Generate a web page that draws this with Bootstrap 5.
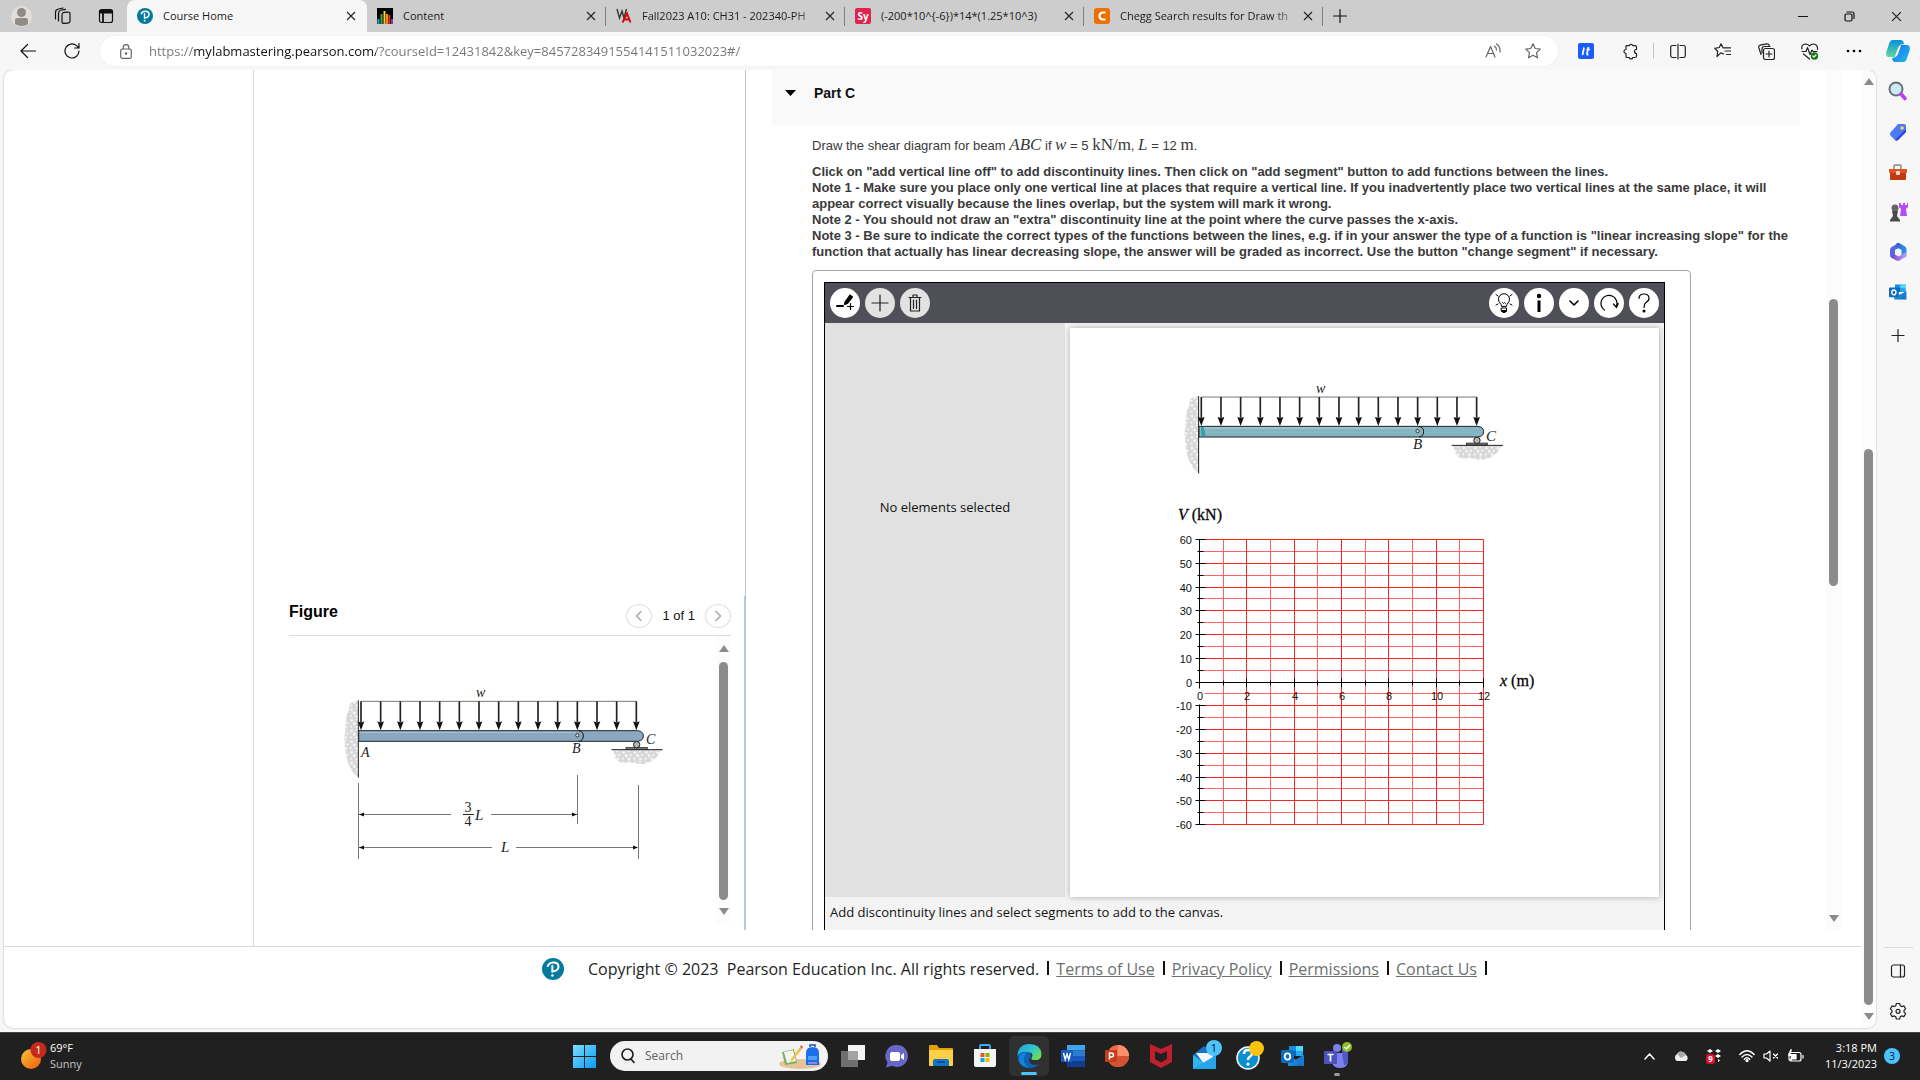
<!DOCTYPE html>
<html lang="en">
<head>
<meta charset="utf-8">
<meta name="viewport" content="width=device-width, initial-scale=1">
<title>Course Home</title>
<link href="https://cdn.jsdelivr.net/npm/bootstrap@5.3.0/dist/css/bootstrap.min.css" rel="stylesheet">
<style>
:root{--ui:"Open Sans","Noto Sans",sans-serif;--arial:"Liberation Sans",Arial,sans-serif;--math:"Liberation Serif","Times New Roman",serif}
body{height:100vh;background:#f7f7f7;font-family:var(--ui);font-size:12px;line-height:16px;color:#111;overflow:hidden}
svg{display:block;flex:none}
button{padding:0;border:0;background:none;color:inherit}
.ico{fill:none;stroke:currentColor;stroke-width:1.2;stroke-linecap:round;stroke-linejoin:round}
/* tab strip */
.tabstrip{height:32px;background:#cdcdcd;flex:none}
.strip-start{width:127px;padding-left:11px;gap:22px}
.browser-tab{width:239px;padding:0 10px;gap:10px;height:32px;position:relative;font-size:11px}
.browser-tab.current{background:#f7f7f7;border-radius:8px 8px 0 0;width:240px;padding-right:11px}
.browser-tab.divided::after{content:"";position:absolute;right:0;top:7px;height:19px;width:1px;background:#7c7c7c}
.tab-title{flex:1;min-width:0;white-space:nowrap;color:#1b1b1b}
.tab-title.fading{-webkit-mask-image:linear-gradient(90deg,#000 88%,#0005)}
.window-keys{gap:36px;padding-right:18px}
/* toolbar */
.toolbar{height:38px;flex:none;padding-left:20px}
.address{height:30px;border-radius:15px;background:#fff;margin-left:20px;padding:0 17px 0 20px;box-shadow:0 0 3px #0000000d;color:#666}
.address input{border:0;outline:0;padding:0;margin-left:17px;min-width:0;font-size:13px;color:transparent;background:linear-gradient(90deg,#757575 45px,#111 45px,#111 227px,#757575 227px);-webkit-background-clip:text;background-clip:text}
.tools{padding-left:6px;color:#222;flex:none}
.cell{width:44px;display:flex;justify-content:center}
.tools .rule{width:1px;height:16px;background:#c5c5c5;margin:0 2px 0 1px}
/* browser frame */
.view{margin:0 0 4px 4px;background:#fff;border-radius:9px;box-shadow:0 0 2px #0000004d;overflow:hidden;min-width:0;min-height:0}
.edgebar{width:44px;padding:10px 0 12px;color:#222;flex:none}
.edgebar .group{gap:16px}
.edgebar hr{width:29px;margin:0;border-color:#888}
.gutter{width:15px;flex:none;background:#fcfcfc}
.thumb{width:9px;border-radius:5px;background:#8b8b8b}
.arrow{width:0;height:0;border:5px solid transparent;border-top-width:0;border-bottom:7px solid #8b8b8b;flex:none}
.arrow.down{border-bottom-width:0;border-top:7px solid #8b8b8b}
/* course page */
.course{min-height:0}
.course-nav{width:250px;border-right:1px solid #d9d9d9;flex:none}
.figure-col{width:492px;flex:none;margin-bottom:16px;border-right:1px solid #b5c9dc}
.figure-box{padding:0 13px 0 35px;height:334px;border-right:1px solid #b5c9dc;font-family:var(--arial)}
.figure-head{height:40px;border-bottom:1px solid #dcdcdc}
.figure-head h2{font-size:16px;font-weight:700;line-height:20px;color:#000;margin:0 0 7px}
.pager-row{gap:10px;font-size:13px}
.pager{width:26px;height:24px;border:1px solid #dedede;border-radius:50%;color:#aaa}
.item-col{min-width:0;margin-bottom:16px;padding-left:26px;overflow:hidden}
.part-head{height:55px;background:#f9f9f9;padding:0 0 10px 13px;gap:18px;font-family:var(--arial)}
.part-head h3{font-size:14px;line-height:20px;font-weight:700;margin:0}
.problem{padding:10px 0 0 40px;font-family:var(--arial);color:#3a3a3a;font-size:13px}
.problem .ask{line-height:20px;margin-bottom:8px}
.problem .notes{font-weight:700;margin:0 0 10px}
.tex{font-family:var(--math);font-size:17px}
.answer{max-width:879px;border:1px solid #a6a6a6;border-radius:4px;padding:11px 25px 11px 11px;height:700px}
.tool{border:1px solid #000;background:#f3f3f3;font-family:var(--ui);color:#111;height:690px}
.tool-bar{height:40px;background:#4f4f58;padding:0 5px}
.round{width:30px;height:30px;border-radius:50%;background:#fff;color:#000;display:flex;align-items:center;justify-content:center}
.round:disabled{background:#e2e2e2;color:#222}
.props{width:240px;background:#e1e1e1;flex:none;padding-top:176px;font-size:13px}
.board-wrap{padding:5px 5px 0;height:574px}
.board{background:#fff;box-shadow:0 0 6px #0000004d;height:569px}
.status{height:30px;padding:7px 5px;font-size:13px}
.site-footer{height:82px;flex:none;border-top:1px solid #d9d9d9;font-size:16px;line-height:24px;color:#252525;padding:10px 0 0 538px;white-space:nowrap}
.site-footer a{color:#6a7070}
.site-footer .bar{width:2px;height:14px;background:#111;margin:4px 7px 0 8px}
/* task bar */
.taskbar{height:48px;background:#202020;border-top:1px solid #454545;color:#fff;flex:none;font-size:11px;padding-bottom:1px}
.side-slot{flex:1 1 0;min-width:0}
.start{margin-left:12px}
.task-search{width:218px;height:30px;border-radius:15px;background:#f2f2f2;margin:0 3px 0 14px;padding:0 6px 0 10px}
.task-search input{border:0;outline:0;background:none;padding:0;width:100px;margin-left:10px;font-size:12px;color:#555}
.task-search input::placeholder{color:#606060;opacity:1}
.app{width:44px;height:40px;display:flex;align-items:center;justify-content:center;position:relative}
.app.open{background:#303030;border-radius:5px;width:40px;margin:0 2px}
.app.open::after{content:"";position:absolute;left:12px;bottom:1px;width:16px;height:3px;border-radius:2px;background:#4cc2ff}
.app.idle::after{content:"";position:absolute;left:19px;bottom:0;width:6px;height:3px;border-radius:2px;background:#9a9a9a}
.weather{padding-left:20px;gap:3px}
.tray{padding-right:20px}
.tray-icons{gap:16px}
.clock{width:73px;text-align:right}
.count{width:16px;height:16px;border-radius:50%;background:#4cc2ff;color:#111;font-size:10px;text-align:center;margin-left:7px}
svg text.it{font-family:var(--math);font-style:italic;fill:#222}
svg text.num{font-family:var(--arial);font-size:11px;fill:#111}
</style>
<script defer src="https://cdn.jsdelivr.net/npm/bootstrap@5.3.0/dist/js/bootstrap.bundle.min.js"></script>
</head>
<body class="d-flex flex-column">

<!-- shared drawings -->
<svg width="0" height="0" class="position-absolute" aria-hidden="true">
<defs>
<symbol id="pearson" viewBox="0 0 24 24"><circle cx="12" cy="12" r="12" fill="#047a9c"/><path d="M6 9.500C7 6.500 9.500 5 12.500 5c3.500 0 5.500 2 5.500 4.500s-2.300 5-5.500 5M11.300 8v8" fill="none" stroke="#fff" stroke-width="2.200"/><circle cx="11.400" cy="19" r="1.400" fill="#fff"/></symbol>
<symbol id="x" viewBox="0 0 10 10"><path d="M1 1l8 8M9 1L1 9" stroke="#222" stroke-width="1.100"/></symbol>
<linearGradient id="ol" x2="1" y2="1"><stop stop-color="#35b8f1"/><stop offset="1" stop-color="#0a64c0"/></linearGradient>
<linearGradient id="cp" x2="1" y2="1"><stop stop-color="#2450e0"/><stop offset=".4" stop-color="#1a8ff0"/><stop offset="1" stop-color="#22b8f5"/></linearGradient>
<linearGradient id="cp2" x2="0" y2="1"><stop stop-color="#0a8fe0"/><stop offset="1" stop-color="#5ed89a"/></linearGradient>
<linearGradient id="win" x2="1" y2="1"><stop stop-color="#7bdcff"/><stop offset="1" stop-color="#0a9cf5"/></linearGradient>
<linearGradient id="sun" x2="1" y2="1"><stop stop-color="#f7c531"/><stop offset="1" stop-color="#f05a10"/></linearGradient>
<linearGradient id="edge" x2="1" y2=".7"><stop stop-color="#1c9fe0"/><stop offset=".6" stop-color="#35c8c8"/><stop offset="1" stop-color="#6be04f"/></linearGradient>
<linearGradient id="m1" x2="1" y2="1"><stop stop-color="#2b59d8"/><stop offset="1" stop-color="#35a6ee"/></linearGradient>
<linearGradient id="m2" x2="1"><stop stop-color="#6a45c8"/><stop offset="1" stop-color="#c79af0"/></linearGradient>
<symbol id="outlook" viewBox="0 0 24 24"><path d="M8 2h14v9H8z" fill="#1490df"/><path d="M15 2h7v5h-7z" fill="#50d9ff"/><path d="M8 7h7v5H8z" fill="#0364b8"/><path d="M15 7h7v5h-7z" fill="#28a8ea"/><path d="M6 11l9 5 8-5v11H7z" fill="url(#ol)"/><path d="M23 11v11l-9-6z" fill="#1a7cd0"/><rect y="6" width="13" height="13" rx="1.200" fill="#0f6cbd"/><ellipse cx="6.500" cy="12.500" rx="2.800" ry="3.200" fill="none" stroke="#fff" stroke-width="1.800"/></symbol>
<pattern id="gravel" width="34" height="32" patternUnits="userSpaceOnUse"><rect width="34" height="32" fill="#d8d8d8"/><circle cx="7" cy="7" r="3.500" fill="#fff"/><circle cx="22" cy="4" r="2.500" fill="#fff"/><circle cx="15" cy="17" r="4" fill="#fff"/><circle cx="28" cy="15" r="3" fill="#fff"/><circle cx="5" cy="26" r="2.800" fill="#fff"/><circle cx="23" cy="27" r="3.500" fill="#fff"/></pattern>
<g id="load"><path d="M0 334v62" stroke="#222" stroke-width="5"/><path d="M-10 394l10 27 10-27q-10 5-20 0z" fill="#111"/></g>
<!-- drawn at three times its displayed size -->
<g id="beam">
<path d="M265 333q-20-2-27 12 2 14-6 24-8 14-3 28-8 14-3 28-6 18-1 32-3 18 3 34 2 24 12 40 8 20 25 30z" fill="url(#gravel)"/>
<path d="M1030 480h145q-14 14-14 22-12 4-16 12-12 4-20 8-16-2-24 0-18-4-24-6-14 6-28 0-18-8-19-36z" fill="url(#gravel)"/>
<path d="M265 331v232" stroke="#222" stroke-width="3"/>
<path d="M273 334h826" stroke="#777" stroke-width="3"/>
<g id="loads"></g>
<path d="M266 422h837q17 2 17 16t-17 16H266z" fill="currentColor" stroke="#222" stroke-width="3"/>
<path d="M268 427h650" stroke="#fff" stroke-opacity=".25" stroke-width="4"/>
<path d="M926 422q14 2 14 16t-14 16" fill="none" stroke="#111" stroke-width="3"/>
<circle cx="922" cy="436" r="5" fill="#ddd" stroke="#222" stroke-width="2.500"/>
<rect x="1068" y="472" width="64" height="6" fill="#777" stroke="#222" stroke-width="2"/>
<path d="M1024 479h154" stroke="#222" stroke-width="3"/>
<circle cx="1100" cy="464" r="9.500" fill="#b5b5b5" stroke="#222" stroke-width="3"/>
</g>
</defs>
</svg>

<!-- tabs -->
<header class="tabstrip d-flex align-items-center">
  <div class="strip-start d-flex align-items-center">
    <svg width="21" height="21" viewBox="0 0 21 21"><circle cx="10.500" cy="10.500" r="10.500" fill="#e2ddd8"/><circle cx="10.500" cy="6.500" r="4.500" fill="#918b86"/><path d="M4 18v-4q0-2 2.500-2h8q2.500 0 2.500 2v4q-6 4-13 0z" fill="#918b86"/></svg>
    <svg class="ico" width="18" height="18" viewBox="0 0 18 18"><rect x="8" y="5.500" width="8" height="11" rx="2" transform="skewY(-6) translate(0 1)"/><path d="M4.500 14V7q0-3.500 3-4l4-.7M1.500 12V5.500q0-3 3-3.500L9 1"/></svg>
    <svg class="ico" width="24" height="16" viewBox="-4 0 24 16"><rect x="1.500" y="1.500" width="13" height="13" rx="2"/><path d="M2 3h12M2 4.500h12M5 5v9" stroke-width="1.800"/></svg>
  </div>
  <div class="browser-tab current d-flex align-items-center">
    <svg width="16" height="16"><use href="#pearson"/></svg><span class="tab-title">Course Home</span>
    <button aria-label="Close tab"><svg width="10" height="10"><use href="#x"/></svg></button>
  </div>
  <div class="browser-tab divided d-flex align-items-center">
    <svg width="16" height="16" viewBox="0 0 16 16"><rect width="16" height="16"/><path d="M1.500 16v-5" stroke="#27a3e8" stroke-width="2"/><path d="M4.500 16V6" stroke="#3fa844" stroke-width="2"/><path d="M7.500 16V3" stroke="#f2d21b" stroke-width="2"/><path d="M10 16V6" stroke="#f08a1c" stroke-width="2"/><path d="M12.300 16V7" stroke="#e02c35" stroke-width="2"/><path d="M15 16v-5" stroke="#7b3fa0" stroke-width="2"/></svg>
    <span class="tab-title">Content</span>
    <button aria-label="Close tab"><svg width="10" height="10"><use href="#x"/></svg></button>
  </div>
  <div class="browser-tab divided d-flex align-items-center">
    <svg width="16" height="16" viewBox="0 0 16 16" fill="none"><path d="M1 1l2.500 9L6 3l2 7 2.500-9" stroke="#333" stroke-width="1.400"/><path d="M6.500 14.500L11 5.500l3.500 9M8 11.500h5.500" stroke="#d00f14" stroke-width="2"/></svg>
    <span class="tab-title fading">Fall2023 A10: CH31 - 202340-PH</span>
    <button aria-label="Close tab"><svg width="10" height="10"><use href="#x"/></svg></button>
  </div>
  <div class="browser-tab divided d-flex align-items-center">
    <svg width="16" height="16" viewBox="0 0 16 16"><rect width="16" height="16" rx="2" fill="#e0244a"/><text x="8" y="12" text-anchor="middle" font-size="10" font-weight="700" fill="#fff">Sy</text></svg>
    <span class="tab-title">(-200*10^{-6})*14*(1.25*10^3)</span>
    <button aria-label="Close tab"><svg width="10" height="10"><use href="#x"/></svg></button>
  </div>
  <div class="browser-tab divided d-flex align-items-center">
    <svg width="16" height="16" viewBox="0 0 16 16"><rect width="16" height="16" rx="3" fill="#ea7100"/><path d="M11.500 4.500H8.500Q5.500 5 5.500 8t3 3.500h3" fill="none" stroke="#fff" stroke-width="2.200"/></svg>
    <span class="tab-title fading">Chegg Search results for Draw th</span>
    <button aria-label="Close tab"><svg width="10" height="10"><use href="#x"/></svg></button>
  </div>
  <button class="ms-2" aria-label="New tab"><svg class="ico" width="18" height="18" viewBox="0 0 18 18"><path d="M9 2.500v13M2.500 9h13"/></svg></button>
  <div class="window-keys d-flex align-items-center ms-auto">
    <button aria-label="Minimize"><svg class="ico" width="10" height="10" viewBox="0 0 10 10"><path d="M0 5.500h10"/></svg></button>
    <button aria-label="Restore"><svg class="ico" width="11" height="11" viewBox="0 0 11 11"><rect x="1" y="3" width="7" height="7" rx="1.500"/><path d="M3 1h5q2 0 2 2v4.500"/></svg></button>
    <button aria-label="Close"><svg width="11" height="11"><use href="#x"/></svg></button>
  </div>
</header>

<!-- address bar -->
<div class="toolbar d-flex align-items-center">
  <button aria-label="Back"><svg class="ico" width="16" height="16" viewBox="0 0 16 16"><path d="M15.500 8H1M7.500 1.500L1 8l6.500 6.500"/></svg></button>
  <button aria-label="Refresh" class="ms-4 ps-1"><svg class="ico" width="16" height="18" viewBox="0 0 16 18"><path d="M15 9A7 7 0 1 1 12.500 3.600L15 6M15 1.500V6h-4.500"/></svg></button>
  <div class="address d-flex align-items-center flex-grow-1">
    <svg class="ico" width="12" height="15" viewBox="0 0 12 15"><rect x=".7" y="5" width="10.600" height="9.300" rx="1.500"/><path d="M3.200 5V3.500a2.800 2.800 0 0 1 5.600 0V5"/><circle cx="6" cy="9.500" r=".7" fill="#666"/></svg>
    <input type="text" class="flex-grow-1" aria-label="Address" value="https://mylabmastering.pearson.com/?courseId=12431842&amp;key=8457283491554141511032023#/">
    <button aria-label="Read aloud"><svg class="ico" width="16" height="16" viewBox="0 0 16 16"><path d="M1 14L5.500 3.500 10 14M2.700 10.500h5.800M9.500 3q2 1.500 2 4M11.500 1q4 2.500 3.500 8"/></svg></button>
    <button aria-label="Favorite" class="ms-4"><svg class="ico" width="16" height="16" viewBox="0 0 16 16"><path d="M8 .8l2.200 4.700 5.100.6-3.800 3.500 1 5.200L8 12.200l-4.500 2.600 1-5.200L.7 6.100l5.100-.6z"/></svg></button>
  </div>
  <div class="tools d-flex align-items-center">
    <button class="cell" aria-label="Extension"><svg width="16" height="16" viewBox="0 0 16 16"><rect width="16" height="16" rx="2" fill="#1b5cff"/><path d="M6 4.500L4.500 12M10.500 4l-1.500 6.500q-.3 1.500 1.500 1M8.500 6.500h3.500" fill="none" stroke="#fff" stroke-width="1.700"/></svg></button>
    <button class="cell" aria-label="Extensions"><svg class="ico" width="16" height="17" viewBox="0 0 16 17"><path d="M4 3.500q0-.8 1-.8h2.300a1.800 1.800 0 0 1 3.500 0H13q1.500 0 1.500 1.300v2.500a2 2 0 0 0 0 4V13q0 1.500-1.500 1.500h-2.200a1.800 1.800 0 0 1-3.500 0H5q-1 0-1-1v-3a2 2 0 0 1 0-4z"/></svg></button>
    <span class="rule"></span>
    <button class="cell" aria-label="Split screen"><svg class="ico" width="16" height="17" viewBox="0 0 16 17"><path d="M6 2.500H2.500q-1.800 0-1.800 1.800v8.400q0 1.800 1.800 1.800H6M10 2.500h3.500q1.800 0 1.800 1.800v8.400q0 1.800-1.800 1.800H10M8 1v15"/></svg></button>
    <button class="cell" aria-label="Favorites"><svg class="ico" width="17" height="16" viewBox="0 0 17 16"><path d="M9.500 11L6.800 9.900 3 13.500l.7-5L.8 5.300l4.500-.8L7 .8l2 4h7.500M11 8h5.500M12.500 11.500h4"/></svg></button>
    <button class="cell" aria-label="Collections"><svg class="ico" width="17" height="17" viewBox="0 0 17 17"><rect x="5.500" y="5.500" width="11" height="11" rx="2"/><path d="M11 8v6M8 11h6M3 11.500L.8 4.500q-.4-1.800 1.200-2.300L9 .8q1.500-.2 2 1.200l.5 1.500M4 10V6q0-2.500 2.500-2.500H12"/></svg></button>
    <button class="cell" aria-label="Browser essentials"><svg class="ico" width="18" height="17" viewBox="0 0 18 17"><path d="M1 6Q0 1.500 4.500 1 7 1 8.500 3 10 1 12.500 1q4.500.5 4 5.500M1 8.500h4l1.500-4 2.500 7 2-4.500 1 1.500h4M2.500 11l6 5"/><circle cx="13.500" cy="13" r="3.700" fill="#0e7a0d" stroke="none"/><path d="M12 13l1 1 2-2" stroke="#fff"/></svg></button>
    <button class="cell" aria-label="More"><svg width="16" height="4" viewBox="0 0 16 4"><circle cx="2" cy="2" r="1.300"/><circle cx="8" cy="2" r="1.300"/><circle cx="14" cy="2" r="1.300"/></svg></button>
    <button class="cell" aria-label="Copilot"><svg width="24" height="24" viewBox="0 0 24 24"><path d="M6.500 1H15q2 0 2.700 2.500L18 5l-4 1-4 10-1 2H3Q-.5 18 .3 13L3.500 3.500Q4.500 1 6.500 1z" fill="url(#cp2)"/><path d="M17.500 23H9q-2 0-2.700-2.500L6 19l4-1 4-10 1-2h6q3.500 0 2.700 5l-3.200 9.500Q19.500 23 17.500 23z" fill="url(#cp)"/><path d="M9 17.500l3-8.500q1-2.500 3-2.500l-3 8.500q-1 2.500-3 2.500z" fill="#f7f7f7"/></svg></button>
  </div>
</div>

<!-- page and side bar -->
<div class="d-flex flex-grow-1 overflow-hidden">
  <div class="view d-flex flex-grow-1">
    <div class="d-flex flex-column flex-grow-1 overflow-hidden">
      <div class="course d-flex flex-grow-1">
        <nav class="course-nav" aria-label="Course"></nav>
        <section class="figure-col d-flex flex-column justify-content-end">
          <div class="figure-box">
            <div class="figure-head d-flex align-items-center">
              <h2>Figure</h2>
              <div class="pager-row d-flex align-items-center ms-auto">
                <button class="pager" aria-label="Previous"><svg class="ico mx-auto" width="8" height="12" viewBox="0 0 8 12"><path d="M6 1.500L1.500 6 6 10.500" stroke-width="1.600"/></svg></button>
                <span>1 of 1</span>
                <button class="pager" aria-label="Next"><svg class="ico mx-auto" width="8" height="12" viewBox="0 0 8 12"><path d="M2 1.500L6.500 6 2 10.500" stroke-width="1.600"/></svg></button>
              </div>
            </div>
            <div class="d-flex justify-content-between">
              <svg class="mt-5 ms-5" width="333" height="180" viewBox="337 684 333 180" role="img" aria-label="Beam ABC">
                <g transform="translate(270 590) scale(.33333)" color="#8aa9c1"><use href="#beam"/></g>
                <g stroke="#777" fill="none"><path d="M358.500 783v76M577.500 775v49M638.500 785v74M359 814.500h92M491 814.500h86M359 847.500h133M516 847.500h121"/></g>
                <path d="M359 814.500l5-2v4zM577 814.500l-5-2v4zM359 847.500l5-2v4zM638 847.500l-5-2v4z" fill="#111"/>
                <g font-size="14"><text class="it" x="476" y="697">w</text><text class="it" x="361" y="757">A</text><text class="it" x="572" y="753">B</text><text class="it" x="646" y="744">C</text><text class="it" x="475" y="820" font-size="15">L</text><text class="it" x="501" y="852" font-size="15">L</text></g>
                <g font-family="Liberation Serif" font-size="14" text-anchor="middle" fill="#222"><text x="468" y="812">3</text><text x="468" y="826">4</text></g><path d="M463 814.500h11" stroke="#222"/>
              </svg>
              <div class="gutter d-flex flex-column align-items-center" style="height:287px;padding:9px 0 8px">
                <div class="arrow"></div><div class="thumb flex-grow-1" style="margin:10px 0 8px"></div><div class="arrow down"></div>
              </div>
            </div>
          </div>
        </section>

        <main class="item-col flex-grow-1">
          <div class="part-head d-flex align-items-center">
            <svg width="11" height="6" viewBox="0 0 11 6"><path d="M0 0h11L5.500 6z"/></svg><h3>Part C</h3>
          </div>
          <div class="problem">
            <p class="ask">Draw the shear diagram for beam <i class="tex">ABC</i> if <i class="tex">w</i> = 5 <span class="tex">kN/m</span>, <i class="tex">L</i> = 12 <span class="tex">m</span>.</p>
            <p class="notes">Click on "add vertical line off" to add discontinuity lines. Then click on "add segment" button to add functions between the lines.<br>Note 1 - Make sure you place only one vertical line at places that require a vertical line. If you inadvertently place two vertical lines at the same place, it will appear correct visually because the lines overlap, but the system will mark it wrong.<br>Note 2 - You should not draw an "extra" discontinuity line at the point where the curve passes the x-axis.<br>Note 3 - Be sure to indicate the correct types of the functions between the lines, e.g. if in your answer the type of a function is "linear increasing slope" for the function that actually has linear decreasing slope, the answer will be graded as incorrect. Use the button "change segment" if necessary.</p>
            <div class="answer">
              <div class="tool">
                <div class="tool-bar d-flex align-items-center">
                  <div class="d-flex" style="gap:5px">
                    <button class="round" aria-label="Add vertical line"><svg class="ico" width="20" height="20" viewBox="0 0 20 20"><path d="M2 13h6" stroke-width="2"/><path d="M10 9l5-7 2.500 2-5 6.500-3 1z" fill="#000"/><path d="M15.500 10.500v6M12.500 13.500h6"/></svg></button>
                    <button class="round" disabled aria-label="Add segment"><svg class="ico" width="18" height="18" viewBox="0 0 18 18"><path d="M9 1v16M1 9h16"/></svg></button>
                    <button class="round" disabled aria-label="Delete"><svg class="ico" width="14" height="18" viewBox="0 0 14 18"><path d="M1 3.500h12M2.500 3.500v13.500h9V3.500M5 3V1h4v2M5.500 6v8.500M8.500 6v8.500"/></svg></button>
                  </div>
                  <div class="d-flex ms-auto" style="gap:5px">
                    <button class="round" aria-label="Hint"><svg class="ico" style="stroke-width:1" width="20" height="22" viewBox="0 0 20 22"><path d="M7.500 14q0-1.500-1.500-3a5.500 5.500 0 1 1 8 0q-1.500 1.500-1.500 3zM7.500 16h5v2.500h-5zM9 20.500h2M8.500 10.500l1 1 1-1 1 1M2 2.500l2 1.500M18 2.500L16 4M2 13l2-1M18 13l-2-1"/><path d="M8 19h4" stroke-width="2"/></svg></button>
                    <button class="round" aria-label="Information"><svg width="6" height="20" viewBox="0 0 6 20"><circle cx="3" cy="3" r="2.200"/><path d="M1.500 7.500h3V19h-3z"/></svg></button>
                    <button class="round" aria-label="Options"><svg class="ico" width="10" height="6" viewBox="0 0 10 6"><path d="M1 1l4 4 4-4" stroke-width="1.600"/></svg></button>
                    <button class="round" aria-label="Reset"><svg class="ico" width="20" height="20" viewBox="0 0 20 20"><path d="M5.500 17A8 8 0 1 1 17.500 13M14.500 11l3 3.500 1.800-4"/></svg></button>
                    <button class="round" aria-label="Help"><svg class="ico" width="12" height="20" viewBox="0 0 12 20"><path d="M1 5.500Q1 1 6 1t5 4.300Q11 8 8 9.500 6 11 6 14.500"/><circle cx="6" cy="18" r=".9" fill="#000"/></svg></button>
                  </div>
                </div>
                <div class="d-flex">
                  <div class="props text-center">No elements selected</div>
                  <div class="board-wrap flex-grow-1">
                    <div class="board d-flex justify-content-center">
                      <svg width="589" height="569" viewBox="1070 328 589 569" role="img" aria-label="Shear diagram canvas">
                        <g transform="translate(1110.300 285.700) scale(.33333)" color="#85b5c1"><use href="#beam"/><path d="M272 424h8l7 28h-14z" fill="#32a3a8"/></g>
                        <g font-size="14"><text class="it" x="1316" y="393">w</text><text class="it" x="1413" y="449" font-size="15">B</text><text class="it" x="1486" y="441" font-size="15">C</text></g>
                        <text x="1178" y="520" font-family="Liberation Serif" font-size="16" stroke="#111" stroke-width=".3"><tspan font-style="italic">V</tspan> (kN)</text>
                        <text x="1500" y="686" font-family="Liberation Serif" font-size="16" stroke="#111" stroke-width=".3"><tspan font-style="italic">x</tspan> (m)</text>
                        <g id="grid"></g>
                      </svg>
                    </div>
                  </div>
                </div>
                <div class="status">Add discontinuity lines and select segments to add to the canvas.</div>
              </div>
            </div>
          </div>
        </main>
        <div class="gutter d-flex flex-column align-items-center" style="margin:0 20px 16px 26px;padding-bottom:8px">
          <div class="thumb" style="height:287px;margin-top:229px"></div><div class="arrow down mt-auto"></div>
        </div>
      </div>
      <footer class="site-footer d-flex align-items-start">
        <svg width="22" height="24" viewBox="0 0 24 24"><use href="#pearson"/></svg>
        <span class="ms-4">Copyright © 2023 &nbsp;Pearson Education Inc. All rights reserved.</span>
        <span class="bar ms-2"></span><a href="#">Terms of Use</a><span class="bar"></span><a href="#">Privacy Policy</a><span class="bar"></span><a href="#">Permissions</a><span class="bar"></span><a href="#">Contact Us</a><span class="bar"></span>
      </footer>
    </div>
    <div class="gutter d-flex flex-column align-items-center" style="padding:8px 0">
      <div class="arrow"></div><div class="thumb mt-auto mb-2" style="height:59%"></div><div class="arrow down"></div>
    </div>
  </div>

  <aside class="edgebar d-flex flex-column align-items-center">
    <div class="group d-flex flex-column align-items-center">
      <svg width="24" height="24" viewBox="0 0 24 24"><circle cx="10" cy="9" r="6.500" fill="#c9ecfb" stroke="#6b6f76" stroke-width="2"/><path d="M15 14l4 4.500" stroke="#c03cf0" stroke-width="3.600" stroke-linecap="round"/></svg>
      <svg width="24" height="24" viewBox="0 0 24 24"><path d="M12 4h6q2 0 2 2v6L12 20q-1.500 1-3 0l-4.500-4.500q-1.500-1.500 0-3z" fill="#4c7bf5"/><path d="M20 9v3l-8 8q-1.500 1-3 0z" fill="#3340e0"/><circle cx="16" cy="8" r="1.800" fill="#ffd34d"/></svg>
      <svg width="24" height="24" viewBox="0 0 24 24"><path d="M8 9V6q0-1 1-1h5q1 0 1 1v3" fill="none" stroke="#888" stroke-width="1.500"/><path d="M3 9h18v4H3z" fill="#e2521f"/><path d="M4 13h16v6q0 1-1 1H5q-1 0-1-1z" fill="#c33a12"/><rect x="10" y="11" width="4" height="4" rx="1" fill="#ddd"/></svg>
      <svg width="24" height="24" viewBox="0 0 24 24"><path d="M13 3h2v2h2V3h2v2h2V3h1v4l-2 2 1 7h-7l1-7-2-2z" fill="#b64af5"/><circle cx="9" cy="8" r="3.500" fill="#666"/><path d="M6 11h6l-1 5 3 4v1.500H4V20l3-4z" fill="#4a4a4a"/></svg>
      <svg width="24" height="24" viewBox="0 0 24 24"><path d="M12 3.500L5.500 7Q4 8 4 10v5q0 1.500 1.500 2.500L9 19.500V10l6-3z" fill="#5a68e0"/><path d="M11 3q1-.5 2 0l6 3.500q1.500 1 1.500 2.500v6q0 1.500-1 2.500L15.500 15v-5L9 6z" fill="url(#m1)"/><path d="M4.500 16l4.500-1.500 3.500 2 7.500-4V15q0 1.500-1.500 2.500l-5 3q-1.500.8-3 0l-4.500-2.500q-1.200-.8-1.500-2z" fill="url(#m2)"/><circle cx="12" cy="12" r="3" fill="#f7f7f7"/></svg>
      <svg width="18" height="24" viewBox="0 0 24 24"><use href="#outlook"/></svg>
      <button aria-label="Add"><svg class="ico" width="24" height="30" viewBox="0 0 24 30"><path d="M12 9.500v12M6 15.500h12"/></svg></button>
    </div>
    <div class="mt-auto d-flex flex-column align-items-center w-100" style="gap:16px">
      <hr>
      <button aria-label="Hide side bar"><svg class="ico" width="16" height="14" viewBox="0 0 16 14"><rect x="1.500" y="1" width="13" height="12" rx="2"/><path d="M10.500 1v12"/></svg></button>
      <button aria-label="Settings" class="mt-2"><svg class="ico" width="18" height="18" viewBox="0 0 18 18"><path d="M7.300 1.500h3.400l.5 2.200 1.500.9 2.200-.7 1.700 2.900-1.600 1.600v1.700l1.600 1.600-1.700 2.900-2.200-.7-1.500.9-.5 2.200H7.300l-.5-2.200-1.500-.9-2.200.7-1.700-2.900L3 10.100V8.400L1.400 6.800l1.700-2.900 2.200.7 1.500-.9z"/><circle cx="9" cy="9.300" r="2"/></svg></button>
    </div>
  </aside>
</div>

<!-- task bar -->
<footer class="taskbar d-flex align-items-center">
  <div class="side-slot d-flex align-items-center weather">
    <svg width="27" height="28" viewBox="0 0 27 28"><circle cx="11" cy="17" r="10" fill="url(#sun)"/><circle cx="18.500" cy="8" r="8" fill="#c42b1c"/><text x="18.500" y="12" font-size="11" text-anchor="middle" fill="#fff">1</text></svg>
    <div>69°F<br><span style="color:#c5c5c5">Sunny</span></div>
  </div>
  <button class="start" aria-label="Start"><svg width="23" height="23" viewBox="0 0 23 23" fill="url(#win)"><path d="M0 0h11v11H0zM12 0h11v11H12zM0 12h11v11H0zM12 12h11v11H12z"/></svg></button>
  <label class="task-search d-flex align-items-center">
    <svg width="15" height="16" viewBox="0 0 15 16" fill="none" stroke="#222" stroke-width="1.700"><circle cx="7.500" cy="6.500" r="5.500"/><path d="M10.500 10.500l4 4.500"/></svg>
    <input type="text" placeholder="Search" aria-label="Search">
    <svg class="ms-auto" width="44" height="26" viewBox="0 0 44 26"><ellipse cx="22" cy="21" rx="21" ry="5" fill="#e5c498"/><path d="M4 9l12-3 3 14-12 2z" fill="#7faf62"/><path d="M6 9l9-2 3 11-9 2z" fill="#f3f6ef"/><path d="M22 4l-9 12-1 3 3-2 9-11z" fill="#f2c14a"/><path d="M22 4l2 2 1-2-2-2z" fill="#e0605a"/><path d="M28 10q0-6 6.500-6T41 10v12H28z" fill="#1a6fe8"/><path d="M32 4V2h5v2" fill="none" stroke="#1450a8" stroke-width="1.500"/><path d="M30 13h9v4h-9z" fill="#4aa3ff"/><path d="M30 20h9" stroke="#b58bf5" stroke-width="1.500"/></svg>
  </label>
  <div class="d-flex align-items-center">
    <button class="app" aria-label="Task view"><svg width="24" height="22" viewBox="0 0 24 22"><path d="M7 0h17v15H7z" fill="#f4f4f4"/><path d="M0 6h17v16H0z" fill="#8a8a8a" opacity=".75"/></svg></button>
    <button class="app" aria-label="Chat"><svg width="24" height="23" viewBox="0 0 24 23"><path d="M12 0a11 11 0 1 1-5 20.800L1 22.500l1.500-5A11 11 0 0 1 12 0z" fill="#6a66c9"/><rect x="5" y="7" width="10" height="9" rx="2" fill="#fff"/><path d="M16 10l3-2v7l-3-2z" fill="#fff"/></svg></button>
    <button class="app" aria-label="Files"><svg width="24" height="22" viewBox="0 0 24 22"><path d="M0 1q0-1 1-1h7l2 3h13q1 0 1 1v16H0z" fill="#e0a10a"/><path d="M0 5h24v15q0 1-1 1H1q-1 0-1-1z" fill="#ffcf48"/><path d="M4 21v-5q0-2 2-2h12q2 0 2 2v5z" fill="#1273c8"/><path d="M8 17h8" stroke="#0b4f96" stroke-width="2"/></svg></button>
    <button class="app" aria-label="Store"><svg width="22" height="24" viewBox="0 0 22 24"><path d="M6 6V2q0-1 1-1h8q1 0 1 1v4" fill="none" stroke="#35b3ee" stroke-width="1.800"/><path d="M0 5h22v16q0 2-2 2H2q-2 0-2-2z" fill="#f4f4f4"/><path d="M6.500 9h4v4h-4z" fill="#f25022"/><path d="M11.500 9h4v4h-4z" fill="#7fba00"/><path d="M6.500 14h4v4h-4z" fill="#00a4ef"/><path d="M11.500 14h4v4h-4z" fill="#ffb900"/></svg></button>
    <button class="app open" aria-label="Edge"><svg width="25" height="24" viewBox="0 0 25 24"><path d="M12.500 0A12 12 0 0 0 .5 12a12 12 0 0 0 12 12q6 0 9.500-4-6 2.500-9-1-2-3 1-6.500z" fill="#0b63b8"/><path d="M12.500 0q11 0 12 10 0 6-6 6-5 0-4-2 3-5-3-6Q3 7 .5 12 1 0 12.500 0z" fill="url(#edge)"/><path d="M8 11q-4 8 4 12.800Q4 23 2 17 1 9 10 8 9 9 8 11z" fill="#1583d8"/></svg></button>
    <button class="app" aria-label="Word"><svg width="24" height="22" viewBox="0 0 24 22"><path d="M6 0h18v5.500H6z" fill="#41a5ee"/><path d="M6 5.500h18V11H6z" fill="#2b7cd3"/><path d="M6 11h18v5.500H6z" fill="#185abd"/><path d="M6 16.500h18V22H6z" fill="#103f91"/><rect y="5" width="12" height="12" rx="1" fill="#185abd"/><path d="M2.500 8l1.700 6.500L6 9l1.800 5.500L9.500 8" fill="none" stroke="#fff" stroke-width="1.400"/></svg></button>
    <button class="app" aria-label="PowerPoint"><svg width="24" height="22" viewBox="0 0 24 22"><circle cx="13" cy="11" r="11" fill="#ed6c47"/><path d="M13 0a11 11 0 0 1 11 11H13z" fill="#ff8f6b"/><path d="M2 11h22a11 11 0 0 1-22 0z" fill="#d35230"/><rect y="5" width="12" height="12" rx="1" fill="#c43e1c"/><path d="M4.500 14.500V8H6q2.500 0 2.500 2T6 12H4.500" fill="none" stroke="#fff" stroke-width="1.500"/></svg></button>
    <button class="app" aria-label="McAfee"><svg width="22" height="24" viewBox="0 0 22 24"><path d="M0 0l11 5L22 0v18l-11 6L0 18zM5 7v8l6 3.500L17 15V7l-6 3z" fill="#c0202b" fill-rule="evenodd"/></svg></button>
    <button class="app" aria-label="Mail"><svg width="24" height="30" viewBox="0 0 24 30" overflow="visible"><path d="M0 14L11 5l12 9v14H0z" fill="#1673c4"/><path d="M3 12h17v6l-9 5z" fill="#f2f6fa"/><path d="M0 14l11 8L0 28z" fill="#31b5f0"/><path d="M23 14v14H0z" fill="#27a7ea"/><circle cx="21" cy="7" r="8" fill="#4cc2ff"/><text x="21" y="11" text-anchor="middle" font-size="11" fill="#111">1</text></svg></button>
    <button class="app" aria-label="Help"><svg width="26" height="30" viewBox="0 0 26 30" overflow="visible"><circle cx="12" cy="17" r="11" fill="#0a8fd0" stroke="#fff" stroke-width="1.500"/><path d="M8 13q0-4 4-4t4 3.500q0 2-2.500 3.500-1.500 1-1.500 3" fill="none" stroke="#fff" stroke-width="2.500"/><circle cx="12" cy="23" r="1.600" fill="#fff"/><circle cx="20.500" cy="7.500" r="7.500" fill="#ffc20f"/></svg></button>
    <button class="app" aria-label="Outlook"><svg width="24" height="24"><use href="#outlook"/></svg></button>
    <button class="app idle" aria-label="Teams"><svg width="27" height="26" viewBox="0 0 27 26" overflow="visible"><circle cx="13" cy="5" r="4" fill="#7b83eb"/><circle cx="21" cy="8" r="3" fill="#5059c9"/><path d="M8 10h16v9q-1 6-8 6t-8-6z" fill="#7b83eb"/><path d="M18 10h6v8q0 4-4 4z" fill="#5059c9"/><rect y="8" width="13" height="13" rx="1" fill="#4b53bc"/><path d="M3.500 11.500h6M6.500 12v6.500" stroke="#fff" stroke-width="1.700"/><circle cx="23" cy="4" r="5" fill="#8cbf26"/><path d="M20.500 4l2 2 3.500-4" fill="none" stroke="#fff" stroke-width="1.400"/></svg></button>
  </div>
  <div class="side-slot d-flex align-items-center justify-content-end tray">
    <div class="tray-icons d-flex align-items-center">
      <svg class="ico" width="14" height="7" viewBox="0 0 14 7"><path d="M2 6l4.500-5L11 6" stroke-width="1.500"/></svg>
      <svg width="17" height="12" viewBox="0 0 17 12"><path d="M4 11a4 4 0 0 1 0-7 5 5 0 0 1 9 1 3.500 3.500 0 0 1 0 6z" fill="#eee"/><path d="M4 4a5 5 0 0 1 9 1l-5 3z" fill="#aaa"/></svg>
      <svg width="17" height="17" viewBox="0 0 17 17"><path d="M4 1l3 2-3 2-3-2zM12 1l3 2-3 2-3-2zM12 6l3 2-3 2-3-2zM12 11l2 1.500-2 1.500z" fill="#fff"/><rect y="6" width="9" height="10" rx="3" fill="#e0102a"/><text x="4.500" y="14" font-size="8" font-weight="700" text-anchor="middle" fill="#fff">9</text></svg>
      <svg class="ico" width="16" height="12" viewBox="0 0 16 12"><path d="M.8 4.500q7.200-7.500 14.400 0M3 7q5-5 10 0M5.300 9.200q2.700-2.700 5.400 0" stroke-width="1.400"/><circle cx="8" cy="10.700" r="1" fill="#fff"/></svg>
    </div>
    <svg class="ico ms-2" width="16" height="12" viewBox="0 0 16 12"><path d="M1 4v4h2.500L7 11V1L3.500 4zM10.500 4l4 4M14.500 4l-4 4"/></svg>
    <svg class="ico ms-2" width="17" height="14" viewBox="0 0 17 14"><rect x="2" y="3.500" width="12" height="8.500" rx="2"/><path d="M16 6.500v2.500"/><path d="M6 5.500h3v4.500H5z" fill="#fff"/><path d="M4 1L2 6h3l-1 5" stroke-width="1.800"/></svg>
    <div class="clock">3:18 PM<br>11/3/2023</div>
    <span class="count">3</span>
  </div>
</footer>

<script>
const NS='http://www.w3.org/2000/svg';
function add(parent,tag,attrs,text){const e=document.createElementNS(NS,tag);for(const k in attrs)e.setAttribute(k,attrs[k]);if(text!==undefined)e.textContent=text;parent.appendChild(e)}
const loads=document.getElementById('loads');
for(let i=0;i<15;i++)add(loads,'use',{href:'#load',x:273+i*59});
// plot area: 12 m wide, 60 to -60 kN
const g=document.getElementById('grid'),X=1199.5,Y=539.5,W=284,H=285;
const px=n=>Math.round(X+n*W/12-.5)+.5,py=n=>Math.round(Y+(60-n)*H/120-.5)+.5;
for(let v=-60;v<=60;v+=5)add(g,'path',{d:`M${X} ${py(v)}H${px(12)}`,stroke:v%10?'#ff6262':'#ff2222'});
for(let v=1;v<=12;v++)add(g,'path',{d:`M${px(v)} ${Y}V${py(-60)}`,stroke:v%2?'#ff6262':'#ff2222'});
add(g,'path',{d:`M${X} ${Y}V${py(-60)}M${X} ${py(0)}H${px(12)}`,stroke:'#000'});
for(let v=-60;v<=60;v+=5){const l=v%10?[2,4]:[4,6];add(g,'path',{d:`M${X-l[0]} ${py(v)}H${X+l[1]}`,stroke:'#000'});if(v%10===0)add(g,'text',{x:1192,y:py(v)+4,'text-anchor':'end',class:'num'},v)}
for(let v=0;v<=12;v++){const l=v%2?3:5;add(g,'path',{d:`M${px(v)} ${py(0)-l+1}V${py(0)+l}`,stroke:'#000'});if(v%2===0){if(v===0)add(g,'rect',{x:X-4,y:py(0)+6,width:9,height:16,fill:'#fff'});add(g,'text',{x:px(v)+.5,y:py(0)+17,'text-anchor':'middle',class:'num'},v)}}
</script>
</body>
</html>
